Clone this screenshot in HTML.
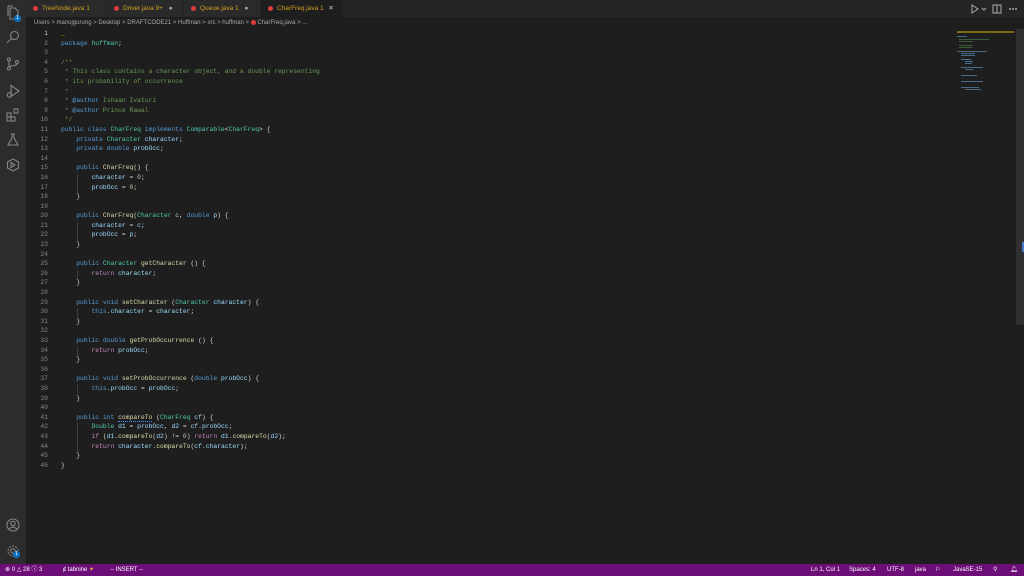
<!DOCTYPE html>
<html><head><meta charset="utf-8"><style>
*{margin:0;padding:0;box-sizing:border-box}
body{width:1024px;height:576px;background:#1e1e1e;overflow:hidden;position:relative;font-family:"Liberation Sans",sans-serif}
#act{position:absolute;left:0;top:0;width:26px;height:564px;background:#2c2c2c}
#tabs{position:absolute;left:26px;top:0;right:0;height:17px;background:#252526}
.tab{position:absolute;top:0;height:17px;font-size:6.5px;line-height:17px;color:#d0a020;background:#2a2a2a;padding-left:7px}
.tab .e{display:inline-block;width:5px;height:5px;border-radius:50%;background:#e03c3c;margin-right:4px;vertical-align:-0.5px}
#bc{position:absolute;left:26px;top:17px;right:0;height:12px;font-size:6px;line-height:12px;color:#a9a9a9;padding-left:8px}
#gut{position:absolute;left:26px;top:29px;width:22px;font-family:"Liberation Mono",monospace;font-size:6.4px;color:#858585;text-align:right}
#code{position:absolute;left:61px;top:29px;font-family:"Liberation Mono",monospace;font-size:6.35px;color:#d4d4d4;white-space:pre}
.l{height:9.6px;line-height:9.6px}
.k{color:#569cd6}.t{color:#4ec9b0}.c{color:#6a9955}.v{color:#9cdcfe}.f{color:#dcdcaa}.n{color:#b5cea8}.p{color:#c586c0}
#sb{position:absolute;left:0;bottom:0;width:1024px;height:12px;background:#6c0d78;color:#fff;font-size:6px;line-height:12px}
svg{position:absolute}
.g{position:absolute;width:1px;background:#404040}
</style></head><body>
<div id="act">
<svg style="left:6px;top:5px" width="14" height="16" viewBox="0 0 14 16" fill="none" stroke="#858585" stroke-width="1.1"><path d="M4 3h5l3 3v8H4z M2 1h5M2 1v10"/></svg>
<div style="position:absolute;left:14px;top:15px;width:7px;height:7px;border-radius:50%;background:#0e70c0;color:#fff;font-size:5px;line-height:7px;text-align:center">1</div>
<svg style="left:6px;top:30px" width="14" height="14" fill="none" stroke="#858585" stroke-width="1.1"><circle cx="8.5" cy="5.5" r="4"/><path d="M5.5 8.5L1 13"/></svg>
<svg style="left:6px;top:57px" width="14" height="14" fill="none" stroke="#858585" stroke-width="1.1"><circle cx="3" cy="2.5" r="1.5"/><circle cx="3" cy="11.5" r="1.5"/><circle cx="11" cy="5" r="1.5"/><path d="M3 4v6M11 6.5c0 3-8 2-8 3.5"/></svg>
<svg style="left:6px;top:84px" width="14" height="14" fill="none" stroke="#858585" stroke-width="1.1"><path d="M5 1.5l8 5.5-8 5.5z"/><circle cx="3.5" cy="11" r="2.3"/></svg>
<svg style="left:6px;top:108px" width="14" height="14" fill="none" stroke="#858585" stroke-width="1.1"><rect x="1" y="5" width="4" height="4"/><rect x="5" y="9" width="4" height="4"/><rect x="1" y="9" width="4" height="4"/><rect x="8" y="1" width="4" height="4"/></svg>
<svg style="left:7px;top:133px" width="12" height="14" fill="none" stroke="#858585" stroke-width="1.1"><path d="M4 1h4M5 1v4L1 12h10L7 5V1"/></svg>
<svg style="left:6px;top:158px" width="14" height="14" fill="none" stroke="#858585" stroke-width="1.1"><path d="M7 1l5.5 3v6L7 13 1.5 10V4z M5 4.5l4 2.5-4 2.5z"/></svg>
<svg style="left:6px;top:518px" width="14" height="14" fill="none" stroke="#858585" stroke-width="1.1"><circle cx="7" cy="7" r="6"/><circle cx="7" cy="5.5" r="2.2"/><path d="M3 11.5c2-3 6-3 8 0"/></svg>
<svg style="left:6px;top:544px" width="14" height="14" fill="none" stroke="#858585" stroke-width="1.1"><circle cx="7" cy="7" r="2.2"/><circle cx="7" cy="7" r="5" stroke-dasharray="2 1.2"/></svg>
<div style="position:absolute;left:13px;top:551px;width:7px;height:7px;border-radius:50%;background:#0e70c0;color:#fff;font-size:5px;line-height:7px;text-align:center">1</div>
</div>
<div id="tabs">
<div class="tab" style="left:0;width:80px"><span class="e"></span>TreeNode.java 1</div>
<div class="tab" style="left:81px;width:76px"><span class="e"></span>Driver.java 9+ <span style="color:#aaa;margin-left:4px">●</span></div>
<div class="tab" style="left:158px;width:76px"><span class="e"></span>Queue.java 1 <span style="color:#aaa;margin-left:4px">●</span></div>
<div class="tab" style="left:235px;width:82px;background:#1e1e1e"><span class="e"></span>CharFreq.java 1 <span style="color:#ccc;margin-left:3px">✕</span></div>
<svg style="left:944px;top:4px" width="50" height="10" fill="none" stroke="#aaa" stroke-width="1"><path d="M2 1l6 4-6 4z M12 4l2 2 2-2"/><rect x="23" y="1" width="8" height="8"/><path d="M27 1v8"/><circle cx="40" cy="5" r=".5"/><circle cx="43" cy="5" r=".5"/><circle cx="46" cy="5" r=".5"/></svg>
</div>
<div id="bc">Users &gt; manojgurung &gt; Desktop &gt; DRAFTCODE21 &gt; Huffman &gt; src &gt; huffman &gt; <span style="display:inline-block;width:5px;height:5px;border-radius:50%;background:#e03c3c;vertical-align:-0.5px"></span> CharFreq.java &gt; ...</div>
<div id="gut">
<div class="l" style="color:#c6c6c6">1</div><div class="l">2</div><div class="l">3</div><div class="l">4</div><div class="l">5</div><div class="l">6</div><div class="l">7</div><div class="l">8</div><div class="l">9</div><div class="l">10</div><div class="l">11</div><div class="l">12</div><div class="l">13</div><div class="l">14</div><div class="l">15</div><div class="l">16</div><div class="l">17</div><div class="l">18</div><div class="l">19</div><div class="l">20</div><div class="l">21</div><div class="l">22</div><div class="l">23</div><div class="l">24</div><div class="l">25</div><div class="l">26</div><div class="l">27</div><div class="l">28</div><div class="l">29</div><div class="l">30</div><div class="l">31</div><div class="l">32</div><div class="l">33</div><div class="l">34</div><div class="l">35</div><div class="l">36</div><div class="l">37</div><div class="l">38</div><div class="l">39</div><div class="l">40</div><div class="l">41</div><div class="l">42</div><div class="l">43</div><div class="l">44</div><div class="l">45</div><div class="l">46</div>
</div>
<div class="g" style="left:77px;top:174px;height:19px"></div>
<div class="g" style="left:77px;top:222px;height:19px"></div>
<div class="g" style="left:77px;top:270px;height:9px"></div>
<div class="g" style="left:77px;top:308px;height:9px"></div>
<div class="g" style="left:77px;top:347px;height:9px"></div>
<div class="g" style="left:77px;top:385px;height:9px"></div>
<div class="g" style="left:77px;top:423px;height:29px"></div>
<div id="code"><div class="l"><span style="color:#cca700">_</span></div><div class="l"><span class="k">package</span> <span class="t">huffman</span>;</div><div class="l"> </div><div class="l c">/**</div><div class="l c"> * This class contains a character object, and a double representing</div><div class="l c"> * its probability of occurrence</div><div class="l c"> *</div><div class="l c"> * <span class="k">@author</span> Ishaan Ivaturi</div><div class="l c"> * <span class="k">@author</span> Prince Rawal</div><div class="l c"> */</div><div class="l"><span class="k">public class</span> <span class="t">CharFreq</span> <span class="k">implements</span> <span class="t">Comparable</span>&lt;<span class="t">CharFreq</span>&gt; {</div><div class="l">    <span class="k">private</span> <span class="t">Character</span> <span class="v">character</span>;</div><div class="l">    <span class="k">private double</span> <span class="v">probOcc</span>;</div><div class="l"> </div><div class="l">    <span class="k">public</span> <span class="f">CharFreq</span>() {</div><div class="l">        <span class="v">character</span> = <span class="n">0</span>;</div><div class="l">        <span class="v">probOcc</span> = <span class="n">0</span>;</div><div class="l">    }</div><div class="l"> </div><div class="l">    <span class="k">public</span> <span class="f">CharFreq</span>(<span class="t">Character</span> <span class="v">c</span>, <span class="k">double</span> <span class="v">p</span>) {</div><div class="l">        <span class="v">character</span> = <span class="v">c</span>;</div><div class="l">        <span class="v">probOcc</span> = <span class="v">p</span>;</div><div class="l">    }</div><div class="l"> </div><div class="l">    <span class="k">public</span> <span class="t">Character</span> <span class="f">getCharacter</span> () {</div><div class="l">        <span class="p">return</span> <span class="v">character</span>;</div><div class="l">    }</div><div class="l"> </div><div class="l">    <span class="k">public void</span> <span class="f">setCharacter</span> (<span class="t">Character</span> <span class="v">character</span>) {</div><div class="l">        <span class="k">this</span>.<span class="v">character</span> = <span class="v">character</span>;</div><div class="l">    }</div><div class="l"> </div><div class="l">    <span class="k">public double</span> <span class="f">getProbOccurrence</span> () {</div><div class="l">        <span class="p">return</span> <span class="v">probOcc</span>;</div><div class="l">    }</div><div class="l"> </div><div class="l">    <span class="k">public void</span> <span class="f">setProbOccurrence</span> (<span class="k">double</span> <span class="v">probOcc</span>) {</div><div class="l">        <span class="k">this</span>.<span class="v">probOcc</span> = <span class="v">probOcc</span>;</div><div class="l">    }</div><div class="l"> </div><div class="l">    <span class="k">public int</span> <span class="f" style="border-bottom:1px dotted #3794ff">compareTo</span> (<span class="t">CharFreq</span> <span class="v">cf</span>) {</div><div class="l">        <span class="t">Double</span> <span class="v">d1</span> = <span class="v">probOcc</span>, <span class="v">d2</span> = <span class="v">cf</span>.<span class="v">probOcc</span>;</div><div class="l">        <span class="p">if</span> (<span class="v">d1</span>.<span class="f">compareTo</span>(<span class="v">d2</span>) != <span class="n">0</span>) <span class="p">return</span> <span class="v">d1</span>.<span class="f">compareTo</span>(<span class="v">d2</span>);</div><div class="l">        <span class="p">return</span> <span class="v">character</span>.<span class="f">compareTo</span>(<span class="v">cf</span>.<span class="v">character</span>);</div><div class="l">    }</div><div class="l">}</div></div>
<div style="position:absolute;left:957px;top:31px;width:57px;height:2px;background:#7a6a10"></div>
<svg style="left:957px;top:34px" width="55" height="60"><g fill="#4a6a8a"><rect x="0" y="2" width="10" height="1"/><rect x="2" y="5" width="30" height="1" fill="#3f5a3a"/><rect x="2" y="7" width="14" height="1" fill="#3f5a3a"/><rect x="2" y="11" width="14" height="1" fill="#3f5a3a"/><rect x="2" y="13" width="13" height="1" fill="#3f5a3a"/><rect x="0" y="17" width="30" height="1"/><rect x="4" y="19" width="14" height="1"/><rect x="4" y="21" width="14" height="1"/><rect x="4" y="25" width="10" height="1"/><rect x="8" y="27" width="8" height="1"/><rect x="8" y="29" width="7" height="1"/><rect x="4" y="33" width="22" height="1"/><rect x="8" y="35" width="8" height="1"/><rect x="4" y="41" width="16" height="1"/><rect x="4" y="47" width="22" height="1"/><rect x="4" y="53" width="18" height="1"/><rect x="8" y="55" width="16" height="1"/></g></svg>
<div style="position:absolute;left:1016px;top:29px;width:8px;height:296px;background:#303030"></div>
<div style="position:absolute;left:1022px;top:242px;width:2px;height:10px;background:#4a78c8"></div>
<div id="sb">
<span style="position:absolute;left:5px">⊗ 0 △ 28 ⓘ 3</span>
<span style="position:absolute;left:63px">ȼ tabnine <span style="color:#f0c040">✦</span></span>
<span style="position:absolute;left:110px">-- INSERT --</span>
<span style="position:absolute;left:811px">Ln 1, Col 1</span>
<span style="position:absolute;left:849px">Spaces: 4</span>
<span style="position:absolute;left:887px">UTF-8</span>
<span style="position:absolute;left:915px">java</span>
<span style="position:absolute;left:935px">⚐</span>
<span style="position:absolute;left:953px">JavaSE-15</span>
<span style="position:absolute;left:993px">⚲</span>
<span style="position:absolute;left:1010px">🔔︎</span>
</div>
</body></html>
